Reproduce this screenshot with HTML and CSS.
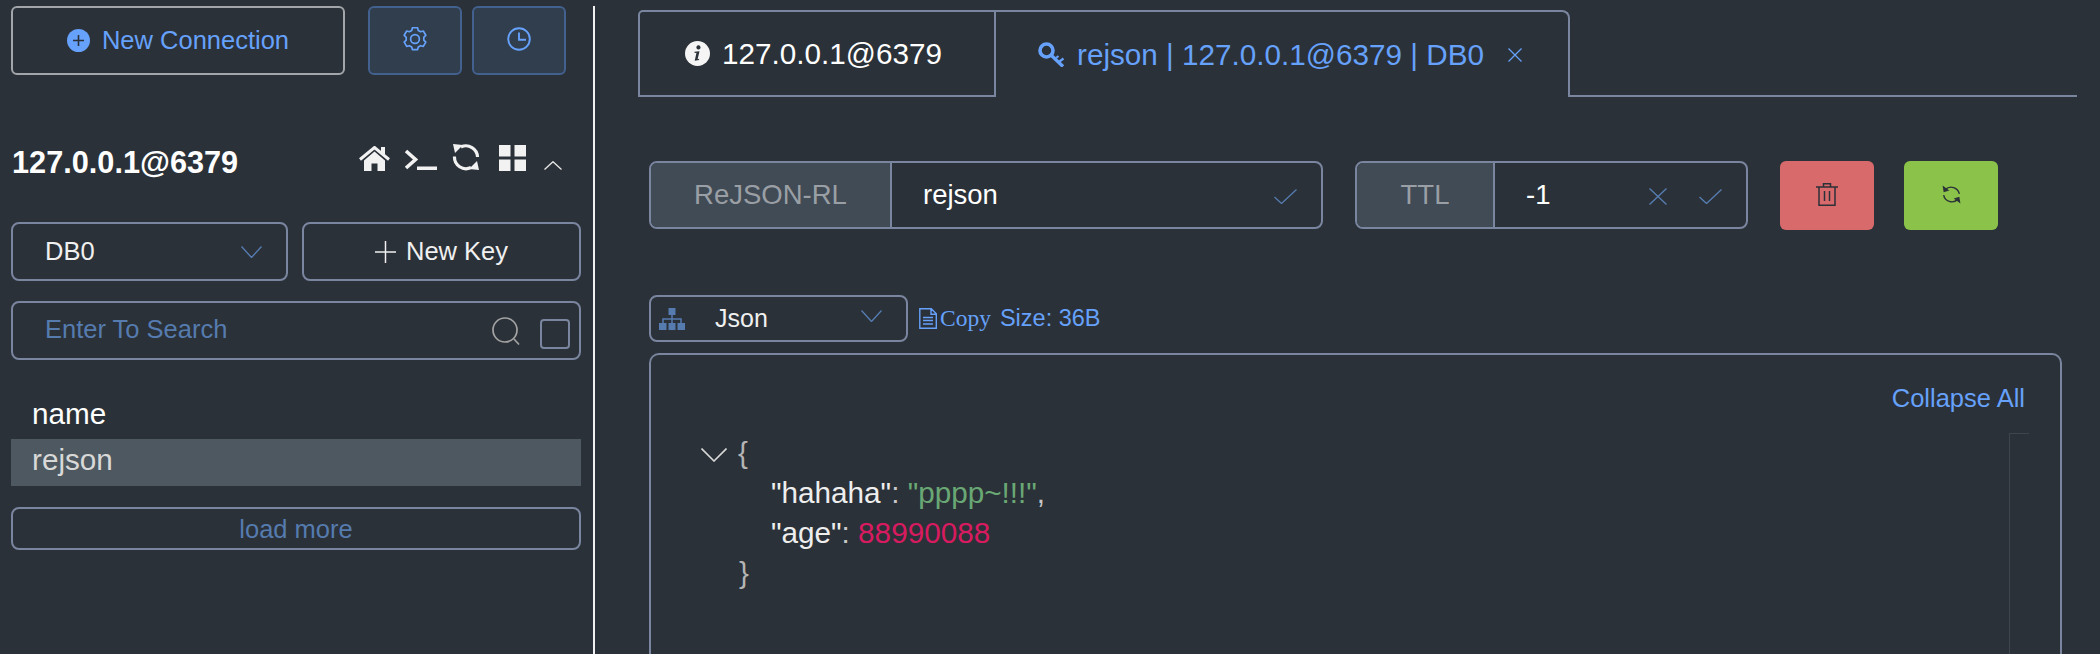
FILE: index.html
```html
<!DOCTYPE html>
<html lang="en">
<head>
<meta charset="utf-8">
<title>RedisInsight</title>
<link rel="stylesheet" href="styles.css">
</head>
<body>
<div class="app">
  <aside class="sidebar">
    <div class="top-row">
      <button class="btn-new">
        <svg class="ic-plus" viewBox="0 0 23 23"><circle cx="11.5" cy="11.5" r="11.5" fill="#66a1fb"/><path d="M11.5 6v11M6 11.5h11" stroke="#2b3138" stroke-width="1.6"/></svg>
        New Connection
      </button>
      <button class="btn-tool btn-tool-first">
        <svg class="ic-tool" viewBox="0 0 24 24" fill="none" stroke="#66a1fb" stroke-width="1.7" stroke-linejoin="round"><path d="M9.500 1h5l.8 2.700 2.300 1.300 2.700-.7 2.500 4.300-2 2 0 2.800 2 2-2.500 4.300-2.700-.7-2.300 1.300-.8 2.700h-5l-.8-2.700-2.300-1.300-2.700.7-2.500-4.300 2-2V10.600l-2-2 2.500-4.300 2.700.7 2.300-1.300z" transform="translate(0 -.3)"/><circle cx="12" cy="12" r="4.400"/></svg>
      </button>
      <button class="btn-tool">
        <svg class="ic-tool" viewBox="0 0 24 24" fill="none" stroke="#66a1fb" stroke-width="1.9"><circle cx="12" cy="12" r="10.8"/><path d="M12 5.5V12.8H19"/></svg>
      </button>
    </div>

    <div class="conn-row">
      <span class="conn-name">127.0.0.1@6379</span>
      <div class="conn-icons">
        <svg class="ic-home" viewBox="0 0 31 25"><path d="M5 14.5L15.5 5.5 26 14.500V25h-7.500v-7.500h-6V25H5z" fill="#f2f2f2"/><path d="M1 13.500L15.500 1.500 30 13.500" fill="none" stroke="#f2f2f2" stroke-width="3"/><path d="M22 1h4v7h-4z" fill="#f2f2f2"/></svg>
        <svg class="ic-term" viewBox="0 0 33 21"><path d="M2 2l9.500 8.500L2 19" fill="none" stroke="#f2f2f2" stroke-width="3.600"/><path d="M13 17.500h20V21H13z" fill="#f2f2f2"/></svg>
        <svg class="ic-sync" viewBox="0 0 28 28" fill="none" stroke="#f2f2f2" stroke-width="3.200"><path d="M9 4A11.500 11.500 0 0 1 25.500 14"/><path d="M2.500 13.500A11.500 11.500 0 0 0 19 24.500"/><path d="M1 1l10 1-8 8zM27 27l-10-1 8-8z" fill="#f2f2f2" stroke="none"/></svg>
        <svg class="ic-grid" viewBox="0 0 27 26" fill="#f2f2f2"><path d="M0 0h11.500v11.500H0zM15.500 0H27v11.500H15.500zM0 14.500h11.500V26H0zM15.500 14.500H27V26H15.500z"/></svg>
        <svg class="ic-caret" viewBox="0 0 18 9" fill="none" stroke="#e8e8e8" stroke-width="1.300"><path d="M.5 8.500L9 .7l8.500 7.800"/></svg>
      </div>
    </div>

    <div class="db-row">
      <div class="field db-select">
        <span>DB0</span>
        <svg class="ic-chev" viewBox="0 0 21 12" fill="none" stroke="#557baf" stroke-width="1.400"><path d="M.5.500l10 11 10-11"/></svg>
      </div>
      <button class="field btn-key">
        <svg class="ic-add" viewBox="0 0 21 22" fill="none" stroke="#f0f0f0" stroke-width="1.500"><path d="M10.500 0v22M0 11h21"/></svg>
        New Key
      </button>
    </div>

    <div class="field search">
      <span class="placeholder">Enter To Search</span>
      <svg class="ic-search" viewBox="0 0 28 28" fill="none" stroke="#a3a3a3" stroke-width="1.700"><circle cx="13" cy="13" r="12"/><path d="M22 22l5 5.500"/></svg>
      <span class="check-box"></span>
    </div>

    <ul class="key-list">
      <li class="key-item">name</li>
      <li class="key-item key-active">rejson</li>
    </ul>

    <button class="field btn-more">load more</button>
  </aside>

  <main class="main">
    <div class="tabs">
      <div class="tab tab-info">
        <svg class="ic-info" viewBox="0 0 25 25"><circle cx="12.500" cy="12.500" r="12.500" fill="#f5f5f5"/><path d="M13.500 4.300a2.100 2.100 0 1 1-.1 0zM9.500 10.800l5-.6-1.900 8 1.600-.5-.2 1.300-4.300.8 1.800-8-1.900.2z" fill="#2b3138"/></svg>
        127.0.0.1@6379
      </div>
      <div class="tab tab-key">
        <svg class="ic-key" viewBox="0 0 28 25" fill="none" stroke="#66a1fb"><circle cx="8.500" cy="8.500" r="6.500" stroke-width="3.600"/><path d="M13.500 13.500L25 24.500" stroke-width="3.400"/><path d="M21.500 19.500l4-3M18 16l2.500-2" stroke-width="2.200"/></svg>
        <span>rejson | 127.0.0.1@6379 | DB0</span>
        <svg class="ic-close" viewBox="0 0 14 14" fill="none" stroke="#66a1fb" stroke-width="1.300"><path d="M.5.500l13 13M13.500.500l-13 13"/></svg>
      </div>
    </div>

    <div class="panel">
      <div class="key-row">
        <div class="group group-key">
          <span class="group-label label-key">ReJSON-RL</span>
          <div class="group-value">
            <span class="value-text">rejson</span>
            <svg class="ic-check" viewBox="0 0 23 15" fill="none" stroke="#557baf" stroke-width="1.300"><path d="M.5 8l7 6.500L22.500.5"/></svg>
          </div>
        </div>
        <div class="group group-ttl">
          <span class="group-label label-ttl">TTL</span>
          <div class="group-value">
            <span class="value-text">-1</span>
            <svg class="ic-x" viewBox="0 0 18 17" fill="none" stroke="#557baf" stroke-width="1.400"><path d="M.5.500l17 16M17.500.500l-17 16"/></svg>
            <svg class="ic-check ic-check-ttl" viewBox="0 0 23 15" fill="none" stroke="#557baf" stroke-width="1.400"><path d="M.5 8l7 6.500L22.500.5"/></svg>
          </div>
        </div>
        <button class="act act-del">
          <svg class="ic-trash" viewBox="0 0 22 23" fill="none" stroke="#2b3138" stroke-width="1.500"><path d="M0 4h22M7.500 4V.8h7V4M3 4v18.200h16V4M8.500 8v10M13.500 8v10"/></svg>
        </button>
        <button class="act act-ref">
          <svg class="ic-ref" viewBox="1 1 17 17" fill="none" stroke="#2b3138" stroke-width="1.300"><path d="M4 5A7.500 7.500 0 0 1 16.500 9M15 14A7.500 7.500 0 0 1 2.500 10"/><path d="M1.500 1.500l1 6 5-1.500zM17.500 17.500l-1-6-5 1.500z" fill="#2b3138" stroke="none"/></svg>
        </button>
      </div>

      <div class="view-row">
        <div class="field view-select">
          <svg class="ic-tree" viewBox="0 0 26 22" fill="#557baf"><path d="M9.500 0h7v7h-7zM0 15h7.500v7H0zM9.500 15h7v7h-7zM18.500 15H26v7h-7.500z"/><path d="M13 7v8M4 15v-4h18v4" fill="none" stroke="#557baf" stroke-width="1.500"/></svg>
          <span class="view-name">Json</span>
          <svg class="ic-chev" viewBox="0 0 21 12" fill="none" stroke="#557baf" stroke-width="1.400"><path d="M.5.500l10 11 10-11"/></svg>
        </div>
        <svg class="ic-file" viewBox="0 0 18 21" fill="none" stroke="#66a1fb" stroke-width="1.400"><path d="M.8.800h11.500l5 5v14.400H.8zM12 .8v5.400h5.300M4 9.500h10M4 12.500h10M4 16h10"/></svg>
        <span class="copy">Copy</span>
        <span class="size">Size: 36B</span>
      </div>

      <div class="editor">
        <div class="collapse-row"><span class="collapse">Collapse All</span></div>
        <div class="code">
          <div class="line line-open">
            <svg class="ic-fold" viewBox="0 0 26 14" fill="none" stroke="#d8d8d8" stroke-width="1.600"><path d="M.5.500L13 13 25.500.5"/></svg>
            <span class="brace">{</span>
          </div>
          <div class="line line-prop"><span class="prop">"hahaha"</span><span class="punct">: </span><span class="str">"pppp~!!!"</span><span class="punct">,</span></div>
          <div class="line line-prop"><span class="prop">"age"</span><span class="punct">: </span><span class="num">88990088</span></div>
          <div class="line line-close"><span class="brace">}</span></div>
        </div>
        <div class="minimap"></div>
      </div>
    </div>
  </main>
</div>
</body>
</html>
```

FILE: styles.css
```css
* { box-sizing: border-box; }

html, body {
  margin: 0;
  height: 654px;
  overflow: hidden;
  background: #2b3138;
  font-family: "Liberation Sans", Arial, sans-serif;
  color: #f0f0f0;
}

button {
  font-family: inherit;
  margin: 0;
  cursor: pointer;
}

svg { display: block; flex: none; }

.app {
  display: flex;
  height: 654px;
  padding-top: 6px;
}

.sidebar {
  flex: none;
  width: 595px;
  padding: 0 12px 0 11px;
  border-right: 2px solid #f0f0f0;
}

.top-row {
  display: flex;
  height: 69px;
}

.btn-new {
  width: 334px;
  display: flex;
  align-items: center;
  justify-content: center;
  gap: 12px;
  background: transparent;
  border: 2px solid #a2a6ab;
  border-radius: 6px;
  color: #66a1fb;
  font-size: 25.500px;
  padding: 0;
}

.ic-plus { width: 23px; height: 23px; }

.btn-tool {
  width: 94px;
  display: flex;
  align-items: center;
  justify-content: center;
  margin-left: 10px;
  background: #313e4d;
  border: 2px solid #42618f;
  border-radius: 6px;
  padding: 0;
}

.btn-tool-first { margin-left: 23px; }

.ic-tool { width: 24px; height: 24px; margin-bottom: 3px; }

.conn-row {
  display: flex;
  justify-content: space-between;
  align-items: flex-end;
  height: 36px;
  margin-top: 69px;
}

.conn-name {
  margin-left: 1px;
  font-size: 30.700px;
  font-weight: 700;
  line-height: 34px;
  color: #fff;
}

.conn-icons {
  display: flex;
  align-items: flex-end;
  padding: 0 19px 9px 0;
}

.ic-home { width: 31px; height: 25px; }
.ic-term { width: 33px; height: 21px; margin-left: 14px; margin-bottom: 1px; }
.ic-sync { width: 28px; height: 28px; margin-left: 15px; }
.ic-grid { width: 27px; height: 26px; margin-left: 19px; }
.ic-caret { width: 18px; height: 9px; margin-left: 18px; margin-bottom: 1px; }

.field {
  border: 2px solid #7a859f;
  border-radius: 8px;
  background: transparent;
}

.db-row {
  display: flex;
  gap: 14px;
  height: 59px;
  margin-top: 42px;
}

.db-select {
  width: 277px;
  display: flex;
  align-items: center;
  justify-content: space-between;
  padding: 0 24px 0 32px;
  font-size: 25.500px;
}

.ic-chev { width: 21px; height: 12px; }

.btn-key {
  flex: 1;
  display: flex;
  align-items: center;
  justify-content: center;
  gap: 10px;
  color: #f0f0f0;
  font-size: 25.500px;
  padding: 0;
}

.ic-add { width: 21px; height: 22px; }

.search {
  display: flex;
  align-items: center;
  height: 59px;
  margin-top: 20px;
  padding: 0 9px 0 32px;
  font-size: 25.500px;
}

.placeholder {
  flex: 1;
  color: #557baf;
  margin-bottom: 3px;
}

.ic-search { width: 28px; height: 28px; }

.check-box {
  width: 30px;
  height: 30px;
  margin-left: 20px;
  margin-top: 6px;
  border: 2px solid #7a859f;
  border-radius: 4px;
}

.key-list {
  list-style: none;
  margin: 32px 0 0;
  padding: 0;
}

.key-item {
  height: 47px;
  padding-left: 21px;
  font-size: 29.700px;
  line-height: 43px;
  color: #fff;
}

.key-active {
  background: #4e5860;
  color: #d8d8d8;
  line-height: 41px;
}

.btn-more {
  display: block;
  width: 100%;
  height: 43px;
  margin-top: 21px;
  padding: 1px 0 0;
  color: #557baf;
  font-size: 25.500px;
}

.main {
  flex: 1;
  min-width: 0;
  padding: 4px 23px 0 43px;
}

.tabs {
  display: flex;
  height: 87px;
  border-bottom: 2px solid #7a859f;
}

.tab {
  display: flex;
  align-items: center;
  height: 87px;
  border-top: 2px solid #7a859f;
  border-right: 2px solid #7a859f;
  font-size: 29.700px;
}

.tab-info {
  width: 358px;
  padding-left: 45px;
  gap: 12px;
  border-left: 2px solid #7a859f;
  border-bottom: 2px solid #7a859f;
  border-top-left-radius: 5px;
  color: #fff;
}

.tab-key {
  width: 574px;
  padding-left: 42px;
  background: #2b3138;
  color: #66a1fb;
  border-top-right-radius: 8px;
}

.ic-info { width: 25px; height: 25px; }
.ic-key { width: 28px; height: 25px; margin-right: 11px; }
.ic-close { width: 14px; height: 14px; margin-left: 24px; }

.panel { margin: 0 15px 0 11px; }

.key-row {
  display: flex;
  align-items: flex-start;
  margin-top: 64px;
}

.group {
  display: flex;
  height: 68px;
  border: 2px solid #7a859f;
  border-radius: 8px;
  overflow: hidden;
}

.group-key { width: 674px; }
.group-ttl { width: 393px; margin-left: 32px; }

.group-label {
  display: flex;
  align-items: center;
  justify-content: center;
  flex: none;
  background: #414b55;
  border-right: 2px solid #7a859f;
  color: #9a9fa5;
  font-size: 27.500px;
}

.label-key { width: 241px; }
.label-ttl { width: 138px; }

.group-value {
  flex: 1;
  display: flex;
  align-items: center;
  padding: 0 24px 0 31px;
  font-size: 27.500px;
  color: #fff;
}

.value-text { flex: 1; }

.ic-check { width: 23px; height: 15px; margin-top: 3px; }
.ic-x { width: 18px; height: 17px; margin-top: 3px; }
.ic-check-ttl { margin-left: 32px; }

.act {
  width: 94px;
  height: 69px;
  display: flex;
  align-items: center;
  justify-content: center;
  border: 0;
  border-radius: 6px;
  padding: 0;
}

.act-del { margin-left: 32px; background: #d96a6b; }
.act-ref { margin-left: 30px; background: #8bc34a; }

.ic-trash { width: 22px; height: 23px; margin-bottom: 3px; }
.ic-ref { width: 19px; height: 19px; margin-bottom: 3px; }

.view-row {
  display: flex;
  align-items: center;
  height: 47px;
  margin-top: 65px;
  color: #66a1fb;
}

.view-select {
  width: 259px;
  height: 47px;
  display: flex;
  align-items: center;
  padding: 0 24px 0 8px;
  font-size: 25px;
  color: #f0f0f0;
}

.ic-tree { width: 26px; height: 22px; }
.view-name { flex: 1; margin-left: 30px; }
.view-select .ic-chev { margin-bottom: 6px; }

.ic-file { width: 18px; height: 21px; margin-left: 11px; }

.copy {
  margin-left: 3px;
  font-family: "Liberation Serif", "Times New Roman", serif;
  font-size: 23.500px;
}

.size {
  margin-left: 9px;
  font-size: 23.500px;
}

.editor {
  position: relative;
  height: 301px;
  margin-top: 11px;
  padding-top: 28px;
  border: 2px solid #7a859f;
  border-bottom: 0;
  border-radius: 10px 10px 0 0;
}

.collapse-row {
  display: flex;
  justify-content: flex-end;
  height: 30px;
  padding-right: 35px;
}

.collapse {
  color: #66a1fb;
  font-size: 25.500px;
  line-height: 30px;
}

.code {
  margin-top: 20px;
  font-size: 29.700px;
  line-height: 40px;
}

.line { height: 40px; white-space: pre; }
.line-open { display: flex; align-items: center; padding-left: 50px; }
.line-prop { padding-left: 120px; }
.line-close { padding-left: 88px; }

.ic-fold { width: 26px; height: 14px; margin-right: 11px; margin-top: 3px; }

.brace { color: #b4b4b4; }
.prop { color: #eeeeee; }
.punct { color: #c8c8c8; }
.str { color: #69a874; }
.num { color: #d81b60; }

.minimap {
  position: absolute;
  top: 78px;
  left: 1358px;
  width: 20px;
  height: 221px;
  border-top: 1px solid #3f454c;
  border-left: 1px solid #3f454c;
}
```
